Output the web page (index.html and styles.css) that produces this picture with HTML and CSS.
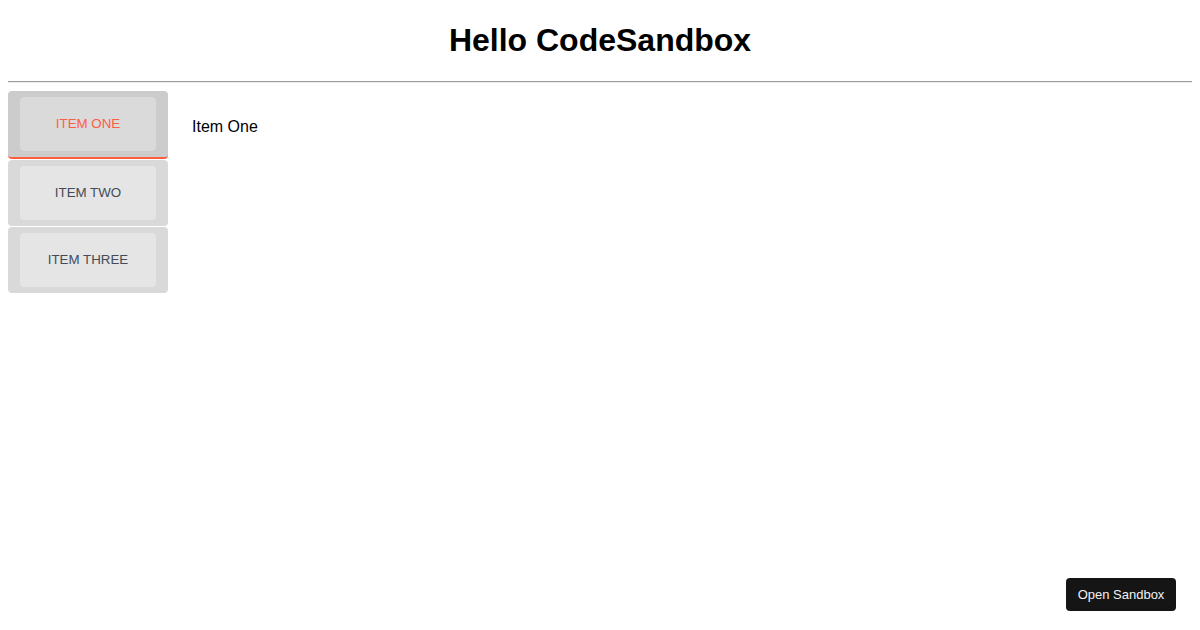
FILE: index.html
```html
<!DOCTYPE html>
<html lang="en">
<head>
<meta charset="utf-8">
<title>Hello CodeSandbox</title>
<link rel="stylesheet" href="styles.css">
</head>
<body>
  <h1 class="title">Hello CodeSandbox</h1>
  <hr class="divider">
  <div class="layout">
    <nav class="tabs">
      <div class="tab tab-active"><button class="tab-btn">Item One</button></div>
      <div class="tab"><button class="tab-btn">Item Two</button></div>
      <div class="tab"><button class="tab-btn">Item Three</button></div>
    </nav>
    <main class="panel">Item One</main>
  </div>
  <a class="open-sandbox">Open Sandbox</a>
</body>
</html>
```
FILE: styles.css
```css
html, body {
  background: #ffffff;
}
body {
  margin: 0;
  padding: 22px 8px 8px;
  font-family: "Liberation Sans", Arial, sans-serif;
  color: #000;
}
.title {
  margin: 0 0 22px;
  font-size: 32px;
  line-height: 37px;
  font-weight: bold;
  text-align: center;
}
.divider {
  margin: 0 0 8px;
  height: 0;
  border: none;
  border-top: 1px solid #9c9c9c;
  border-bottom: 1px solid #ededed;
}
.layout {
  display: flex;
  align-items: flex-start;
}
.tabs {
  width: 160px;
  flex: none;
  display: flex;
  flex-direction: column;
  gap: 1px;
}
.tab {
  background: #d9d9d9;
  padding: 6px 12px;
  border-radius: 4px;
}
.tab-active {
  background: #cccccc;
  border-bottom: 2px solid #ff5c3f;
}
.tab-btn {
  display: flex;
  align-items: center;
  justify-content: center;
  width: 100%;
  height: 54px;
  border: none;
  border-radius: 4px;
  background: #e5e5e5;
  color: #434b58;
  font-family: "Liberation Sans", Arial, sans-serif;
  font-size: 13.33px;
  text-transform: uppercase;
  padding: 0 0 2px;
  margin: 0;
}
.tab-active .tab-btn {
  background: #dadada;
  color: #ff5c45;
}
.panel {
  padding: 27px 24px;
  font-size: 16px;
  line-height: 18px;
}
.open-sandbox {
  position: fixed;
  right: 24px;
  bottom: 19px;
  width: 110px;
  height: 33px;
  box-sizing: border-box;
  display: flex;
  align-items: center;
  justify-content: center;
  background: #151515;
  color: #f2f2f2;
  border-radius: 4px;
  font-size: 13px;
}
```
